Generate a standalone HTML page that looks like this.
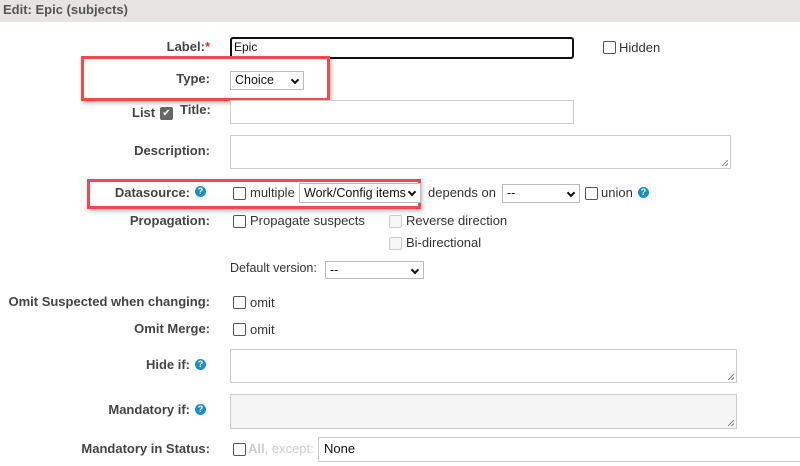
<!DOCTYPE html>
<html><head><style>
body{margin:0;width:800px;height:466px;background:#fff;position:relative;overflow:hidden;font-family:"Liberation Sans",Arial,sans-serif;font-size:13px;color:#333}
.a{position:absolute;white-space:nowrap}
.l{position:absolute;white-space:nowrap;font-weight:bold;color:#444;text-align:right;right:590px}
.cb{position:absolute;width:11px;height:11px;border:1px solid #555;border-radius:2px;background:#fff}
.cbd{position:absolute;width:11px;height:11px;border:1px solid #ccc;border-radius:2px;background:#f6f6f6}
.in{position:absolute;border:1px solid #ccc;background:#fff;box-sizing:border-box}
.sel{position:absolute;border:1px solid #bbb;background:#fff;box-sizing:border-box;font-size:12.5px;padding:1px 0 0 4px;color:#111}
.sel:after{content:"";position:absolute;right:5px;top:5px;width:4px;height:4px;border-right:2px solid #111;border-bottom:2px solid #111;transform:rotate(45deg)}
.q{position:absolute;width:11px;height:11px;border-radius:50%;background:#1a8fc0;color:#fff;font-size:9px;font-weight:bold;text-align:center;line-height:11px}
.rb{position:absolute;border:3px solid #f04a4a;box-shadow:1px 2px 4px rgba(0,0,0,.3)}
.grip{position:absolute;right:2px;bottom:2px;width:6px;height:6px;background:linear-gradient(135deg,transparent 45%,#888 45%,#888 55%,transparent 55%,transparent 75%,#888 75%,#888 85%,transparent 85%)}
</style></head><body>
<div class="a" style="left:0;top:0;width:800px;height:22px;background:#e5e4e2"></div>
<div class="a" style="left:3px;top:2px;font-weight:bold;color:#555">Edit: Epic (subjects)</div>

<div class="l" style="top:39px">Label:<span style="color:#d33">*</span></div>
<div class="in" style="left:230px;top:37px;width:344px;height:22px;border:2px solid #111;border-radius:3px"></div>
<div class="a" style="left:234px;top:40px;color:#111;font-size:12px">Epic</div>
<div class="cb" style="left:603px;top:41px"></div>
<div class="a" style="left:619px;top:40px">Hidden</div>

<div class="rb" style="left:81px;top:56px;width:243px;height:39px"></div>
<div class="l" style="top:71px">Type:</div>
<div class="sel" style="left:230px;top:71px;width:74px;height:19px">Choice</div>

<div class="a" style="left:132px;top:105px;font-weight:bold;color:#444">List</div>
<div class="a" style="left:160px;top:107px;width:13px;height:13px;background:#666;border-radius:2px;color:#fff;font-size:10px;text-align:center;line-height:13px">✔</div>
<div class="a" style="left:180px;top:102px;font-weight:bold;color:#444">Title:</div>
<div class="in" style="left:230px;top:100px;width:344px;height:24px"></div>

<div class="l" style="top:143px">Description:</div>
<div class="in" style="left:230px;top:135px;width:501px;height:34px"><div class="grip"></div></div>

<div class="rb" style="left:87px;top:179px;width:328px;height:24px"></div>
<div class="l" style="top:185px;right:610px">Datasource:</div>
<div class="q" style="left:195px;top:186px">?</div>
<div class="cb" style="left:233px;top:187px"></div>
<div class="a" style="left:250px;top:185px">multiple</div>
<div class="sel" style="left:299px;top:183px;width:122px;height:20px;padding-top:2px">Work/Config items</div>
<div class="a" style="left:428px;top:185px">depends on</div>
<div class="sel" style="left:502px;top:184px;width:78px;height:19px">--</div>
<div class="cb" style="left:585px;top:187px"></div>
<div class="a" style="left:601px;top:185px">union</div>
<div class="q" style="left:638px;top:187px">?</div>

<div class="l" style="top:213px">Propagation:</div>
<div class="cb" style="left:233px;top:215px"></div>
<div class="a" style="left:250px;top:213px">Propagate suspects</div>
<div class="cbd" style="left:389px;top:215px"></div>
<div class="a" style="left:406px;top:213px">Reverse direction</div>
<div class="cbd" style="left:389px;top:237px"></div>
<div class="a" style="left:406px;top:235px">Bi-directional</div>

<div class="a" style="left:230px;top:261px;font-size:12.5px">Default version:</div>
<div class="sel" style="left:325px;top:261px;width:99px;height:18px">--</div>

<div class="l" style="top:294px">Omit Suspected when changing:</div>
<div class="cb" style="left:233px;top:296px"></div>
<div class="a" style="left:250px;top:295px">omit</div>

<div class="l" style="top:321px">Omit Merge:</div>
<div class="cb" style="left:233px;top:323px"></div>
<div class="a" style="left:250px;top:322px">omit</div>

<div class="l" style="top:357px;right:610px">Hide if:</div>
<div class="q" style="left:195px;top:359px">?</div>
<div class="in" style="left:230px;top:349px;width:507px;height:34px"><div class="grip"></div></div>

<div class="l" style="top:402px;right:610px">Mandatory if:</div>
<div class="q" style="left:195px;top:404px">?</div>
<div class="in" style="left:230px;top:394px;width:507px;height:35px;background:#f5f5f5"><div class="grip"></div></div>

<div class="l" style="top:441px">Mandatory in Status:</div>
<div class="cb" style="left:233px;top:443px"></div>
<div class="a" style="left:248px;top:441px;color:#ccc"><b>All</b>, except:</div>
<div class="in" style="left:318px;top:437px;width:490px;height:25px"></div>
<div class="a" style="left:324px;top:441px;color:#111">None</div>
</body></html>
